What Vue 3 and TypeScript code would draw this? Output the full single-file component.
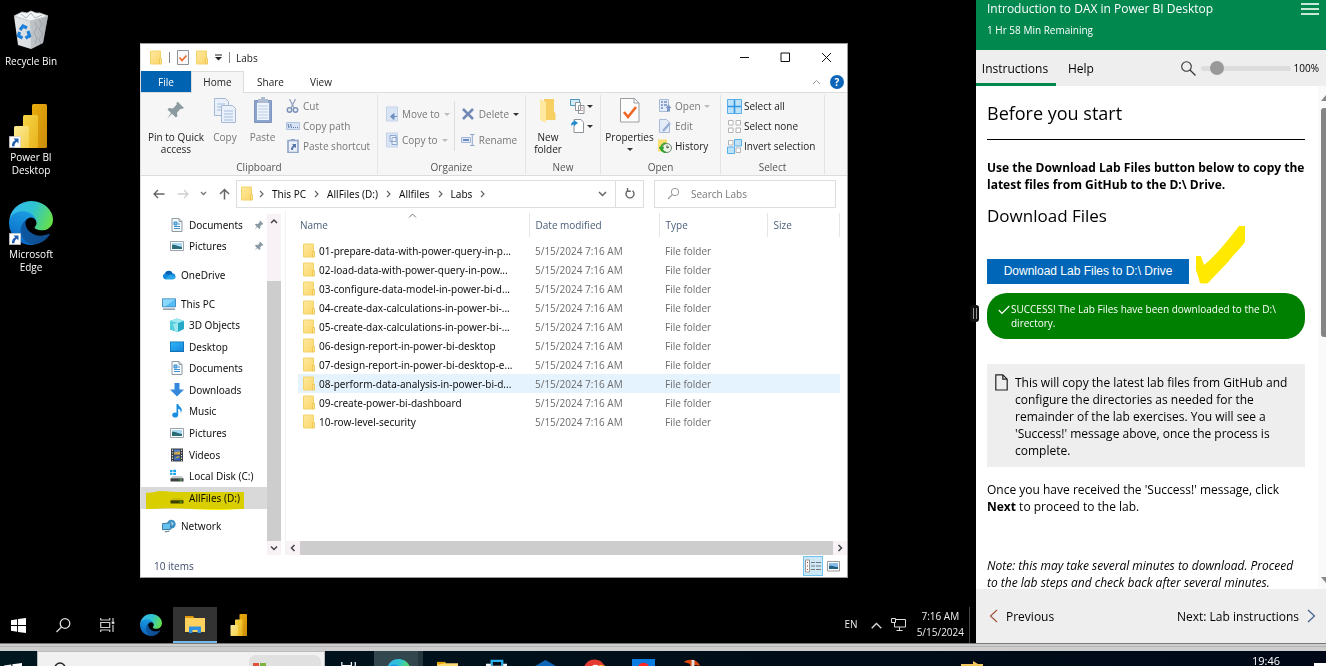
<script setup lang="ts">
import { ref } from 'vue'

interface NavItem {
  label: string
  icon: string
  level: number
  pinned?: boolean
  gap?: boolean
  active?: boolean
}

const navItems: NavItem[] = [
  { label: 'Documents', icon: 'doc', level: 1, pinned: true },
  { label: 'Pictures', icon: 'pic', level: 1, pinned: true },
  { label: 'OneDrive', icon: 'cloud', level: 0, gap: true },
  { label: 'This PC', icon: 'pc', level: 0, gap: true },
  { label: '3D Objects', icon: 'cube', level: 1 },
  { label: 'Desktop', icon: 'screen', level: 1 },
  { label: 'Documents', icon: 'doc', level: 1 },
  { label: 'Downloads', icon: 'down', level: 1 },
  { label: 'Music', icon: 'music', level: 1 },
  { label: 'Pictures', icon: 'pic', level: 1 },
  { label: 'Videos', icon: 'video', level: 1 },
  { label: 'Local Disk (C:)', icon: 'diskc', level: 1 },
  { label: 'AllFiles (D:)', icon: 'disk', level: 1, active: true },
  { label: 'Network', icon: 'network', level: 0, gap: true },
]

const files: string[] = [
  '01-prepare-data-with-power-query-in-p...',
  '02-load-data-with-power-query-in-pow...',
  '03-configure-data-model-in-power-bi-d...',
  '04-create-dax-calculations-in-power-bi-...',
  '05-create-dax-calculations-in-power-bi-...',
  '06-design-report-in-power-bi-desktop',
  '07-design-report-in-power-bi-desktop-e...',
  '08-perform-data-analysis-in-power-bi-d...',
  '09-create-power-bi-dashboard',
  '10-row-level-security',
]
const hovered = 7

const crumbs: string[] = ['This PC', 'AllFiles (D:)', 'Allfiles', 'Labs']
const hostApps: string[] = ['h-task', 'edge', 'h-folder', 'h-store', 'h-house', 'h-chrome', 'h-tile', 'h-red']
const zoom = ref(6)
const search = ref('')
</script>

<template>
  <div class="page">
    <svg class="defs" width="0" height="0" aria-hidden="true">
      <defs>
        <linearGradient id="gFold" x1="0" y1="0" x2="1" y2="1"><stop offset="0" stop-color="#ffe9a0" /><stop offset="1" stop-color="#fbd668" /></linearGradient>
        <linearGradient id="gE1" x1="0" y1="0" x2="1" y2="0"><stop offset="0" stop-color="#0c59a4" /><stop offset="1" stop-color="#114a8b" /></linearGradient>
        <linearGradient id="gE2" x1="0.6" y1="0" x2="0.3" y2="1"><stop offset="0" stop-color="#1b9de2" /><stop offset="0.5" stop-color="#1383d5" /><stop offset="1" stop-color="#0a5fbf" /></linearGradient>
        <linearGradient id="gE3" x1="0" y1="0.3" x2="1" y2="0.6"><stop offset="0" stop-color="#35b8f1" /><stop offset="0.5" stop-color="#2fc4cf" /><stop offset="1" stop-color="#66e04a" /></linearGradient>
        <linearGradient id="gB1" x1="0" y1="0" x2="1" y2="1"><stop offset="0" stop-color="#e9ac0b" /><stop offset="1" stop-color="#c98c0c" /></linearGradient>
        <linearGradient id="gB2" x1="0" y1="0" x2="1" y2="1"><stop offset="0" stop-color="#f7d548" /><stop offset="1" stop-color="#e8b21c" /></linearGradient>
        <linearGradient id="gB3" x1="0" y1="0" x2="1" y2="1"><stop offset="0" stop-color="#fcea9a" /><stop offset="1" stop-color="#f4cf44" /></linearGradient>
        <linearGradient id="gBin" x1="0" y1="0" x2="1" y2="0"><stop offset="0" stop-color="#e3e6e8" /><stop offset="0.6" stop-color="#d6dadd" /><stop offset="1" stop-color="#92989d" /></linearGradient>
        <linearGradient id="gScr" x1="0" y1="0" x2="1" y2="1"><stop offset="0" stop-color="#2fb4f7" /><stop offset="1" stop-color="#148ae0" /></linearGradient>
      </defs>
      <symbol id="folder" viewBox="0 0 12 15"><path d="M0.5 1h10v13h-10z" fill="url(#gFold)" stroke="#f3d36b" /><path d="M9.5 8.500h2v5.500h-2z" fill="#ffe591" stroke="#ecc14d" stroke-width=".8" /></symbol>
      <symbol id="edge" viewBox="0 0 256 256">
        <path fill="url(#gE1)" d="M231 190.500c-3.400 1.800-6.900 3.400-10.500 4.700a101 101 0 0 1-35.900 6.500c-47.300 0-88.500-32.600-88.500-74.300.1-11.400 6.400-21.900 16.400-27.300-42.800 1.800-53.800 46.400-53.800 72.500 0 73.900 68.100 81.400 82.800 81.400 7.900 0 19.800-2.300 27-4.600l1.300-.4a128.300 128.300 0 0 0 66.600-52.800c2-3.100-1.200-7.300-5.400-5.700z" />
        <path fill="url(#gE2)" d="M105.700 241.400a79.200 79.200 0 0 1-22.700-21.300A80.700 80.700 0 0 1 112.500 100c3.100-1.500 8.400-4.100 15.500-4a32.400 32.400 0 0 1 25.700 13 31.900 31.900 0 0 1 6.300 18.700c0-.2 24.500-79.600-80-79.600-43.900 0-80 41.600-80 78.200a130 130 0 0 0 12.100 56 128 128 0 0 0 156.400 67 75.500 75.500 0 0 1-62.800-7.900z" />
        <path fill="url(#gE3)" d="M152.300 148.900c-.8 1-3.300 2.500-3.300 5.700 0 2.600 1.700 5.100 4.700 7.200 14.400 10 41.500 8.700 41.600 8.700a59.600 59.600 0 0 0 30.300-8.300 61.400 61.400 0 0 0 30.400-52.900c.3-22.400-8-37.300-11.300-43.900C223.500 23.900 177.700 0 128 0A128 128 0 0 0 0 126.200C.5 89.700 36.800 60.200 80 60.200c3.500 0 23.500.3 42 10a72.600 72.600 0 0 1 30.900 29.300c6.100 10.600 7.200 24.100 7.200 29.500s-2.700 13.300-7.800 19.900z" />
      </symbol>
      <symbol id="powerbi" viewBox="0 0 34 44"><rect x="18" y="0" width="15" height="44" rx="1.500" fill="url(#gB1)" /><rect x="9" y="11" width="15" height="33" rx="1.500" fill="url(#gB2)" /><rect x="0" y="22" width="15" height="22" rx="1.500" fill="url(#gB3)" /></symbol>
      <symbol id="bin" viewBox="0 0 36 40">
        <path d="M1 6l16 4 18-4-5 27-12 6-13-4z" fill="url(#gBin)" /><path d="M17 10l18-4-5 27-12 6z" fill="#b3b8bc" opacity=".7" /><path d="M26 9l3 5-3 5 4 5-4 5 2 5M22 12l2 5-3 6 3 5-2 6" fill="none" stroke="#a0a5a9" stroke-width="1" />
        <path d="M1 6l8-4 5 1 4-2 5 2 4 0 8 3-18 5z" fill="#f3f5f6" stroke="#bfc4c7" stroke-width=".8" /><path d="M8 4l5 4 5-5 4 5 7-3" fill="none" stroke="#aeb3b7" stroke-width="1" />
        <g fill="none" stroke="#1c80d8" stroke-width="3.200"><path d="M7 20l3-4 4 2" /><path d="M15 21l1.500 5-4 2" /><path d="M9.500 28l-4-2 1-4" /></g>
      </symbol>
      <symbol id="shortcut" viewBox="0 0 12 12"><path fill="#fff" stroke="#bbb" stroke-width=".6" d="M.3.300h11.400v11.400H.3z" /><path d="M4.500 2.500h5v5L7.800 5.800C6 7 5.500 8.200 5.600 10.300H3C2.600 7.400 4 5.300 6.200 4.200z" fill="#235fb0" /></symbol>
      <symbol id="doc" viewBox="0 0 14 14"><path d="M2 .5h7l3 3v10H2z" fill="#f7f9fa" stroke="#8c9ba6" /><path d="M9 .5v3h3" fill="none" stroke="#8c9ba6" /><path d="M4 4h3v3H4zM4 8.500h6M4 10.500h6M8 6h2" stroke="#3b93cf" fill="#7cbce6" /></symbol>
      <symbol id="pic" viewBox="0 0 14 14"><path d="M.5 2.500h13v9H.5z" fill="#fff" stroke="#9aa5ad" /><path d="M2 4h10v6H2z" fill="#a8d8f2" /><path d="M2 6c3-1 6 2 10 2v2H2z" fill="#2a6b78" /></symbol>
      <symbol id="cloud" viewBox="0 0 15 14"><path d="M3.500 11.500a3.200 3.200 0 0 1-.3-6.200A4.500 4.500 0 0 1 11.300 5a3.300 3.300 0 0 1 .6 6.500z" fill="#1388dc" /><path d="M3.500 11.500L9 6.500l5.500 2.500a2.600 2.600 0 0 1-2.500 2.500z" fill="#28a8ea" /><path d="M3 5.500A4.500 4.500 0 0 1 11.300 5L7.500 7z" fill="#0863b5" /></symbol>
      <symbol id="pc" viewBox="0 0 15 14"><path d="M.5 1.500h14v8.500H.5z" fill="#52bdf6" stroke="#3b87b6" /><path d="M1 2h13L4 9.500H1z" fill="#8bd6fb" /><path d="M1 12.500h13" stroke="#8393a0" stroke-width="1.500" /></symbol>
      <symbol id="cube" viewBox="0 0 14 14"><path d="M0 3l7-2.500L14 3v8l-6 3-8-2.500z" fill="#24a9c9" /><path d="M0 3l8 2v9l-8-2.500z" fill="#54cfe0" /><path d="M0 3l7-2.500L14 3 8 5z" fill="#9eeaf0" /><path d="M3 6l5-1v9l-3-1z" fill="#c2f2f3" opacity=".7" /></symbol>
      <symbol id="screen" viewBox="0 0 14 14"><path d="M0 1.500h14v10.500H0z" fill="#1270b5" /><path d="M.8 2.300h12.400v8.500H.8z" fill="url(#gScr)" /></symbol>
      <symbol id="down" viewBox="0 0 14 14"><path d="M4.500 0h5v6.500H14L7 13.500 0 6.500h4.500z" fill="#3289dc" /></symbol>
      <symbol id="music" viewBox="0 0 14 14"><path d="M6.500 0h1.700c.3 2.300 4 3.300 3.500 6.800-.1 1-.6 1.800-1 2.200.4-2.600-1-4-2.500-4.300v6.300a3 2.500 0 1 1-1.700-2.200z" fill="#1a8ee0" /></symbol>
      <symbol id="video" viewBox="0 0 14 14"><path d="M1 .5h12v13H1z" fill="#35393d" /><path d="M4 1.500h6v5H4z" fill="#557fc4" /><path d="M4 7.500h6v5H4z" fill="#3566b5" /><path d="M4 4.500l6-1v3H4zM4 11l4-3 2 1z" fill="#d3a943" /><path d="M2.500 1.500v12M11.500 1.500v12" stroke="#d8d8d8" stroke-width="1.200" stroke-dasharray="1.400 1.300" /></symbol>
      <symbol id="disk" viewBox="0 0 14 14"><path d="M2.500 7h9L13.500 9.500H.5z" fill="#c9ccce" /><path d="M.5 9.300h13v3.200H.5z" fill="#3c4043" /><path d="M9.500 10.500h2.500v1H9.500z" fill="#58dc58" /></symbol>
      <symbol id="diskc" viewBox="0 0 14 14"><path d="M2.500 7h9L13.500 9.500H.5z" fill="#c9ccce" /><path d="M.5 9.300h13v3.200H.5z" fill="#3c4043" /><path d="M9.500 10.500h2.500v1H9.500z" fill="#58dc58" /><path d="M0 1h2.500v2H0zM3.200.8h2.800v2.200H3.200zM0 3.700h2.500v2H0zM3.200 3.700h2.800v2.300H3.200z" fill="#1ba5ee" /></symbol>
      <symbol id="network" viewBox="0 0 15 14"><circle cx="10" cy="5" r="4.600" fill="#3a8fc4" /><path d="M7 3.500c2-2 4-1 5 0s0 3-2 3z" fill="#9bd3ee" /><path d="M.5 4.500l9-1v7l-9 .5z" fill="#63c2f0" stroke="#356f98" /><path d="M3 13.300l5-.8" stroke="#7893a5" stroke-width="1.500" /></symbol>
      <symbol id="pin" viewBox="0 0 10 10"><path d="M6 .5L9.500 4l-1 .5-.6-.1L6.200 6.200l.1 2-1 .9-2-2L.5 9.500l2.200-3L.9 4.700l1-.9 2 .2L5.600 2.200 5.500 1.500z" fill="#8a9aa3" /></symbol>
      <symbol id="h-win" viewBox="0 0 16 16"><path d="M0 2.300l6.500-1v6.200H0zM7.500 1.100L16 0v7.500H7.500zM0 8.500h6.500v6.200L0 13.700zM7.500 8.500H16V16l-8.500-1.200z" fill="#fff" /></symbol>
      <symbol id="h-task" viewBox="0 0 24 24"><path d="M4 3v4h10V3" stroke="#fff" fill="none" stroke-width="1.300" /><path d="M18 3v9" stroke="#fff" stroke-width="1.300" /></symbol>
      <symbol id="h-folder" viewBox="0 0 24 24"><path d="M1 3h9v4H1z" fill="#e5a50a" /><path d="M1 6l9-1.500h13V20H1z" fill="#fdd978" /></symbol>
      <symbol id="h-store" viewBox="0 0 24 24"><path d="M7 7V2h11v5" fill="none" stroke="#28b3ef" stroke-width="2.400" /><path d="M1 5h5v2h13V5h4v16H1z" fill="#f4f8fb" /></symbol>
      <symbol id="h-house" viewBox="0 0 24 24"><path d="M0 8l12-7 12 7v16H0z" fill="#0f66b8" /></symbol>
      <symbol id="h-chrome" viewBox="0 0 24 24"><circle cx="12" cy="12" r="11.500" fill="#e33b30" /><circle cx="13" cy="12" r="6" fill="#fff" /><path d="M17 6l6 1v8h-4z" fill="#fbc934" /></symbol>
      <symbol id="h-tile" viewBox="0 0 24 24"><path d="M0 0h24v24H0z" fill="#087ce0" /><ellipse cx="12" cy="8" rx="5.500" ry="4" fill="#ff2525" /></symbol>
      <symbol id="h-red" viewBox="0 0 24 24"><path d="M3 3C8-1 17 0 20 7l-7-1v8L9 5z" fill="#df470c" /><path d="M11 1h3v14h-3z" fill="#dedede" /></symbol>
    </svg>

    <div class="main">
      <section class="desktop">
        <div class="shortcuts">
          <a class="dicon first" href="#bin"><svg class="d-bin"><use href="#bin" /></svg><span>Recycle Bin</span></a>
          <a class="dicon" href="#powerbi"><span class="art"><svg class="d-pbi"><use href="#powerbi" /></svg><svg class="arrow"><use href="#shortcut" /></svg></span><span>Power BI<br />Desktop</span></a>
          <a class="dicon" href="#edge"><span class="art"><svg class="d-edge"><use href="#edge" /></svg><svg class="arrow"><use href="#shortcut" /></svg></span><span>Microsoft<br />Edge</span></a>
        </div>

        <div class="window">
          <header class="titlebar">
            <svg class="fi"><use href="#folder" /></svg><i class="bar"></i>
            <svg width="12" height="15" viewBox="0 0 12 15"><path d="M.5.500h11v14H.5z" fill="#fafafa" stroke="#8e9499" /><path d="M2.500 7.500l2.500 3 4.500-5" fill="none" stroke="#f0662a" stroke-width="1.600" /></svg>
            <svg class="fi"><use href="#folder" /></svg>
            <svg width="7" height="7" viewBox="0 0 7 7"><path d="M0 1h7" stroke="#222" /><path d="M0 3h7L3.500 6.500z" fill="#222" /></svg>
            <i class="bar"></i><span class="wtitle">Labs</span>
            <div class="wctl">
              <button aria-label="Minimize"><svg width="11" height="11" viewBox="0 0 11 11"><path d="M1 5.500h9" stroke="#111" /></svg></button>
              <button aria-label="Maximize"><svg width="11" height="11" viewBox="0 0 11 11"><path d="M1 1h8.500v8.500H1z" stroke="#111" fill="none" /></svg></button>
              <button aria-label="Close"><svg width="11" height="11" viewBox="0 0 11 11"><path d="M1 1l9 9M10 1L1 10" stroke="#111" /></svg></button>
            </div>
          </header>
          <nav class="tabs">
            <button class="tab file">File</button><button class="tab home">Home</button><button class="tab">Share</button><button class="tab view">View</button>
            <div class="help">
              <svg width="9" height="6" viewBox="0 0 9 6"><path d="M1 5l3.500-3.500L8 5" stroke="#999" fill="none" /></svg>
              <button class="q" aria-label="Help">?</button>
            </div>
          </nav>

          <div class="ribbon">
            <div class="group g-clip">
              <div class="tools">
                <button class="big w-pin"><svg width="24" height="30" viewBox="0 0 24 30"><path d="M14 6l6 6-2 1-1.500-.3-3.500 4 .4 3.500-1.600 1.400-3.800-3.800L3 23l4-6L3.500 13.500 5 12l4 .4 3.700-4L12.500 6.500z" fill="#8b9a9f" /></svg><span>Pin to Quick<br />access</span></button>
                <button class="big dim w-copy"><svg width="24" height="30" viewBox="0 0 24 30"><g fill="#eaf1fa" stroke="#a5b8d4"><path d="M1.500 2.500h11l3 3v14h-14z" /><path d="M8.500 9.500h11l3 3v14h-14z" /></g><path d="M4 8h8M4 11h4M4 14h4M11 15h9M11 18h9M11 21h9M11 24h9" stroke="#a5bddf" /></svg><span>Copy</span></button>
                <button class="big dim w-paste"><svg width="20" height="30" viewBox="0 0 20 30"><path d="M1.500 4.500h17v22h-17z" fill="#8ca3cb" stroke="#7f95bd" /><path d="M4 7h12v17H4z" fill="#eef4fc" /><path d="M5 3h10v4H5zM8 1h4v3H8z" fill="#aebcd2" /><path d="M5 10h10M5 13h10M5 16h10M5 19h10M5 22h10" stroke="#b9cde9" /></svg><span>Paste</span></button>
                <div class="stack dim">
                  <button><svg width="14" height="14" viewBox="0 0 14 14"><path d="M3.500 0l4.500 9M9.500 0L5 9" stroke="#93a4bf" stroke-width="1.300" /><g fill="none" stroke="#7b92ba" stroke-width="1.500"><circle cx="3.500" cy="11" r="2.200" /><circle cx="9.500" cy="11" r="2.200" /></g></svg>Cut</button>
                  <button><svg width="14" height="14" viewBox="0 0 14 14"><path d="M.5 3.500h13v7H.5z" fill="#d7e3f5" stroke="#b3c4de" /><path d="M2 5l1 4M4.500 5l1 4M7 8.500h1M9 8.500h1M11 8.500h1" stroke="#5a77aa" /></svg>Copy path</button>
                  <button><svg width="14" height="14" viewBox="0 0 14 14"><path d="M2 1.500h10v12H2z" fill="#e9f0fa" stroke="#91a5c8" stroke-width="1.600" /><path d="M5 0h4v2H5z" fill="#91a5c8" /><path d="M6 5h4v4L8.500 8C7 9 7 10 7 11H5c0-2 .5-3.500 2.300-4.500z" fill="#5b78ab" /></svg>Paste shortcut</button>
                </div>
              </div>
              <div class="glabel">Clipboard</div>
            </div>
            <div class="group g-org">
              <div class="tools org">
                <div class="stack dim wide">
                  <button><svg width="12" height="16" viewBox="0 0 12 16"><path d="M.5 1h11v14H.5z" fill="#d9e4f4" stroke="#c4d2e8" /><path d="M11 10.500H6M8 7.500L4.500 10.500 8 13.500z" stroke="#6f8fc0" fill="#6f8fc0" /></svg>Move to<b class="caret lite"></b></button>
                  <button><svg width="12" height="16" viewBox="0 0 12 16"><path d="M.5 1h11v14H.5z" fill="#d9e4f4" stroke="#c4d2e8" /><path d="M4 3.500h6v6H4zM6 5.500h5v7H6z" fill="#eef3fa" stroke="#8ea7cf" /></svg>Copy to<b class="caret lite"></b></button>
                </div>
                <i class="vsep"></i>
                <div class="stack dim wide">
                  <button><svg width="14" height="14" viewBox="0 0 14 14"><path d="M2 2l10 10M12 2L2 12" stroke="#7088b5" stroke-width="2.500" /></svg>Delete<b class="caret"></b></button>
                  <button><svg width="14" height="14" viewBox="0 0 14 14"><path d="M.5 4.500h9v5h-9z" fill="#dfe9f7" stroke="#a3b6d6" /><path d="M2 7h6" stroke="#6e8cc0" stroke-width="2" /><path d="M9 1.500h4.500M9 12.500h4.500M11.300 1.500v11" stroke="#8fa5ca" /></svg>Rename</button>
                </div>
              </div>
              <div class="glabel">Organize</div>
            </div>
            <div class="group g-new">
              <div class="tools">
                <button class="big w-new"><svg width="18" height="30" viewBox="0 0 18 30"><path d="M5 3h10v13l1.500 1v7H5z" fill="#f8cf62" /><path d="M1 3l6 3v21l-6-3z" fill="#ffe8a1" /></svg><span>New<br />folder</span></button>
                <div class="stack icons">
                  <button aria-label="New item"><svg width="15" height="16" viewBox="0 0 15 16"><path d="M.5 1.500h9v6h-9z" fill="#d3ebf8" stroke="#4b94bd" /><path d="M5.500 4.500h5v8h-5zM8.500 7.500h5.500v8h-5.500z" fill="#fff" stroke="#8e9499" /><path d="M10 10h3M10 12.500h3" stroke="#c9a0a0" /></svg><b class="caret"></b></button>
                  <button aria-label="Easy access"><svg width="15" height="16" viewBox="0 0 15 16"><path d="M4 1.500h7l2.500 3v10H4z" fill="#fff" stroke="#8e9499" /><path d="M1 8c0-3 1-4 3-4.500V2l4 3-4 3V6.500C2.500 6.500 2 7 1 8z" fill="#238ad0" /></svg><b class="caret"></b></button>
                </div>
              </div>
              <div class="glabel">New</div>
            </div>
            <div class="group g-open">
              <div class="tools">
                <button class="big w-prop"><svg width="20" height="30" viewBox="0 0 20 30"><path d="M.5 2.500h14l4.500 4.500v19H.5z" fill="#fdfdfd" stroke="#9a9fa3" /><path d="M14 2.500V7h5" fill="none" stroke="#9a9fa3" /><path d="M4 16l4 5 8-10" fill="none" stroke="#f26522" stroke-width="2.600" /></svg><span>Properties</span><b class="caret"></b></button>
                <div class="stack">
                  <button class="dim"><svg width="14" height="14" viewBox="0 0 14 14"><path d="M1.500.500h9v12h-9z" fill="#e4ecf8" stroke="#a9bbd8" /><path d="M3 3h2M3 6h2M3 9h2M6 3h3M6 6h3" stroke="#6d8cbf" stroke-width="1.400" /><path d="M9 12.500V9H7.500L10.500 5.500 13.500 9H12v3.500z" fill="#7d98c6" /></svg>Open<b class="caret lite"></b></button>
                  <button class="dim"><svg width="14" height="14" viewBox="0 0 14 14"><path d="M1.500.500h7l3 3v10h-10z" fill="#e4ecf8" stroke="#a9bbd8" /><path d="M12 4l-7 8" stroke="#94abd2" stroke-width="2" /></svg>Edit</button>
                  <button><svg width="14" height="14" viewBox="0 0 14 14"><path d="M0 .5h9v12H0z" fill="#fbdf70" /><circle cx="9" cy="9" r="4.500" fill="#e9f3e6" stroke="#77857a" /><path d="M9 6.500V9l2-1" stroke="#444" fill="none" /><path d="M3 9a5 5 0 0 1 5-5M1.500 8l2 3 2-3M4 11a5 5 0 0 0 4 2.500" stroke="#2ea52e" stroke-width="1.600" fill="none" /></svg>History</button>
                </div>
              </div>
              <div class="glabel">Open</div>
            </div>
            <div class="group g-sel">
              <div class="tools">
                <div class="stack sel">
                  <button><svg width="15" height="15" viewBox="0 0 15 15"><path d="M.5.500h14v14H.5z" fill="#bfe2fb" stroke="#58aee8" /><path d="M7.500 1v13M1 7.500h13" stroke="#2f96e0" stroke-width="1.600" /></svg>Select all</button>
                  <button><svg width="15" height="15" viewBox="0 0 15 15"><path d="M1.500 1.500h4.500v4.500H1.500zM9 1.500h4.500v4.500H9zM1.500 9h4.500v4.500H1.500zM9 9h4.500v4.500H9z" fill="#fff" stroke="#b4b4b4" /></svg>Select none</button>
                  <button><svg width="15" height="15" viewBox="0 0 15 15"><path d="M1.500 1.500h4.500v4.500H1.500zM9 9h4.500v4.500H9z" fill="#fff" stroke="#b4b4b4" /><path d="M7.500.500h7v6.500h-7zM.5 8h7v6.500h-7z" fill="#bfe2fb" stroke="#58aee8" /></svg>Invert selection</button>
                </div>
              </div>
              <div class="glabel">Select</div>
            </div>
          </div>

          <div class="address">
            <div class="arrows">
              <svg width="12" height="10" viewBox="0 0 12 10"><path d="M11.500 5H1M5 1L1 5l4 4" fill="none" stroke="#666" stroke-width="1.300" /></svg>
              <svg width="12" height="10" viewBox="0 0 12 10"><path d="M.5 5H11M7 1l4 4-4 4" fill="none" stroke="#d0d0d0" stroke-width="1.300" /></svg>
              <svg width="7" height="5" viewBox="0 0 7 5"><path d="M1 1l2.500 2.500L6 1" fill="none" stroke="#777" stroke-width="1.300" /></svg>
              <svg width="11" height="12" viewBox="0 0 11 12"><path d="M5.500 11.500V1.500M1 6l4.500-4.500L10 6" fill="none" stroke="#666" stroke-width="1.500" /></svg>
            </div>
            <div class="path">
              <svg class="fi"><use href="#folder" /></svg>
              <svg width="5" height="8" viewBox="0 0 5 8"><path d="M1 1l3 3-3 3" fill="none" stroke="#666" stroke-width="1.200" /></svg>
              <template v-for="c in crumbs" :key="c"><a href="#path">{{ c }}</a><svg width="5" height="8" viewBox="0 0 5 8"><path d="M1 1l3 3-3 3" fill="none" stroke="#666" stroke-width="1.200" /></svg></template>
              <svg class="drop" width="9" height="6" viewBox="0 0 9 6"><path d="M1 1l3.500 3.500L8 1" fill="none" stroke="#666" stroke-width="1.500" /></svg>
            </div>
            <button class="refresh" aria-label="Refresh"><svg width="12" height="12" viewBox="0 0 12 12"><path d="M8.500 2.800a4 4 0 1 1-5 0M3.500 0v3.300h3.300" fill="none" stroke="#666" stroke-width="1.400" /></svg></button>
            <label class="search"><svg width="13" height="13" viewBox="0 0 13 13"><circle cx="8" cy="5" r="3.700" fill="none" stroke="#999" /><path d="M5.300 7.700L1 12" stroke="#999" stroke-width="1.200" /></svg><input v-model="search" type="text" placeholder="Search Labs" aria-label="Search Labs" /></label>
          </div>

          <div class="body">
            <div class="tree">
              <a v-for="(n, i) in navItems" :key="i" href="#nav" class="node" :class="{ sub: n.level, gap: n.gap, active: n.active }">
                <svg class="nicon"><use :href="'#' + n.icon" /></svg><span>{{ n.label }}</span>
                <svg v-if="n.pinned" class="npin"><use href="#pin" /></svg>
                <svg v-if="n.active" class="marker" viewBox="0 0 100 22" preserveAspectRatio="none"><path d="M0 3C5 3 10 2 13 1c8 0 12 1 18 1h67v18c-10 0-12 1-24 1-20 0-30-2-52-2-6 0-16 1-22 1z" fill="#fff200" /></svg>
              </a>
            </div>
            <div class="vbar">
              <svg width="14" height="14" viewBox="0 0 14 14"><path d="M4 9l3-3 3 3" fill="none" stroke="#444" stroke-width="1.500" /></svg>
              <i></i>
              <svg width="14" height="14" viewBox="0 0 14 14"><path d="M4 5.500l3 3 3-3" fill="none" stroke="#444" stroke-width="1.500" /></svg>
            </div>
            <div class="list">
              <table>
                <colgroup><col class="c0" /><col class="c1" /><col class="c2" /><col class="c3" /></colgroup>
                <thead><tr><th>Name<svg class="sort" width="9" height="5" viewBox="0 0 9 5"><path d="M1 4.500L4.500 1 8 4.500" fill="none" stroke="#777" /></svg></th><th>Date modified</th><th>Type</th><th>Size</th></tr></thead>
                <tbody>
                  <tr v-for="(f, i) in files" :key="f" :class="{ hover: i === hovered }">
                    <td><svg class="fi"><use href="#folder" /></svg>{{ f }}</td><td>5/15/2024 7:16 AM</td><td>File folder</td><td></td>
                  </tr>
                </tbody>
              </table>
              <div class="hbar">
                <svg width="14" height="14" viewBox="0 0 14 14"><path d="M8.500 4l-3 3 3 3" fill="none" stroke="#444" stroke-width="1.500" /></svg>
                <i></i>
                <svg width="14" height="14" viewBox="0 0 14 14"><path d="M5.500 4l3 3-3 3" fill="none" stroke="#444" stroke-width="1.500" /></svg>
              </div>
            </div>
          </div>
          <footer class="status"><span>10 items</span>
            <div class="modes">
              <button class="on" aria-label="Details"><svg width="16" height="14" viewBox="0 0 16 14"><path d="M.5 1h4v12h-4z" fill="#fff" stroke="#999" /><path d="M2 3.500h1M2 7h1M2 10.500h1" stroke="#b33" /><path d="M6 3.500h4M11 3.500h5M6 7h4M11 7h5M6 10.500h4M11 10.500h5" stroke="#777" /></svg></button>
              <button aria-label="Large icons"><svg width="13" height="11" viewBox="0 0 13 11"><path d="M.5.500h12v9.500H.5z" fill="#fff" stroke="#999" /><path d="M2 2h9v6H2z" fill="#87bfea" /><path d="M2 5c4-1 5 1 9 1v2H2z" fill="#245f88" /></svg></button>
            </div>
          </footer>
        </div>

        <div class="taskbar">
          <button class="start" aria-label="Start"><svg width="15" height="15"><use href="#h-win" /></svg></button>
          <button aria-label="Search"><svg width="15" height="15" viewBox="0 0 15 15"><circle cx="9" cy="5.500" r="4.800" fill="none" stroke="#ddd" stroke-width="1.300" /><path d="M5.500 9L.5 14" stroke="#ddd" stroke-width="1.300" /></svg></button>
          <button aria-label="Task view"><svg width="15" height="14" viewBox="0 0 15 14"><path d="M.7 0v2h9V0M.7 4.500h9v5h-9zM.7 14v-2h9v2M13 0v3M13 7v7" fill="none" stroke="#ccc" stroke-width="1.200" /><path d="M11.700 3.500h2.600v2.300h-2.600z" fill="#eee" /></svg></button>
          <button aria-label="Microsoft Edge"><svg width="22" height="22"><use href="#edge" /></svg></button>
          <button class="active" aria-label="File Explorer"><svg width="20" height="17" viewBox="0 0 20 17"><path d="M0 0h8l1.500 2H0z" fill="#e0960a" /><path d="M0 2h20v14H0z" fill="#fcd15e" /><path d="M4 17v-6.500h12V17h-3.500v-3h-5v3z" fill="#2f8fe0" /></svg></button>
          <button aria-label="Power BI"><svg width="18" height="22"><use href="#powerbi" /></svg></button>
          <div class="tray">
            <span class="lang">EN</span>
            <svg width="11" height="7" viewBox="0 0 11 7"><path d="M.7 6.300L5.500 1.500l4.800 4.800" fill="none" stroke="#ddd" stroke-width="1.300" /></svg>
            <svg width="15" height="14" viewBox="0 0 15 14"><path d="M5 1.500h9.500v7.500H3.500V5M8.500 9v3M5.500 12.500h6" fill="none" stroke="#ddd" /><path d="M.5.500h4v4h-4z" fill="none" stroke="#ddd" /></svg>
            <span class="clock">7:16 AM<br />5/15/2024</span><i class="peek"></i>
          </div>
        </div>
        <div class="splitter"><i></i><i></i></div>
      </section>

      <aside class="panel">
        <header class="phead">
          <div><div class="ptitle">Introduction to DAX in Power BI Desktop</div><div class="ptime">1 Hr 58 Min Remaining</div></div>
          <button class="burger" aria-label="Menu"><i></i><i></i><i></i></button>
        </header>
        <nav class="ptabs">
          <button class="on">Instructions</button><button class="helpb">Help</button>
          <label class="zoom"><svg width="15" height="15" viewBox="0 0 15 15"><circle cx="5.500" cy="5.500" r="4.800" fill="none" stroke="#333" stroke-width="1.100" /><path d="M9 9l5.500 5.500" stroke="#333" stroke-width="1.300" /></svg><input v-model="zoom" type="range" min="0" max="50" aria-label="Zoom" /><span>100%</span></label>
        </nav>
        <div class="pscroll">
          <div class="pcontent">
            <h1>Before you start</h1>
            <p class="strong">Use the Download Lab Files button below to copy the<br />latest files from GitHub to the D:\ Drive.</p>
            <h2>Download Files</h2>
            <div class="dl"><button>Download Lab Files to D:\ Drive</button>
              <svg class="tick" width="50" height="58" viewBox="0 0 50 58"><path d="M43 0h6v16C44 23 38 28 32 36L12 57Q10 58 4 57Q2 50 0 44V30h5l3 9C20 29 29 18 43 0z" fill="#ffe900" /></svg>
            </div>
            <div class="success"><svg width="12" height="12" viewBox="0 0 12 12"><path d="M.8 6l3.200 3.500L11.300 2" fill="none" stroke="#fff" stroke-width="1.200" /></svg><span>SUCCESS! The Lab Files have been downloaded to the D:\<br />directory.</span></div>
            <div class="note"><svg width="13" height="17" viewBox="0 0 13 17"><path d="M.8.800h7l4.400 4.400v10.800H.8zM7.800.800v4.400h4.400" fill="none" stroke="#222" stroke-width="1.200" /></svg><span>This will copy the latest lab files from GitHub and<br />configure the directories as needed for the<br />remainder of the lab exercises. You will see a<br />'Success!' message above, once the process is<br />complete.</span></div>
            <p class="once">Once you have received the 'Success!' message, click<br /><b>Next</b> to proceed to the lab.</p>
            <p class="ital">Note: this may take several minutes to download. Proceed<br />to the lab steps and check back after several minutes.</p>
          </div>
          <div class="pbar"><svg width="10" height="6" viewBox="0 0 10 6"><path d="M0 6l5-6 5 6z" fill="#888" /></svg><i></i><svg width="10" height="6" viewBox="0 0 10 6"><path d="M0 0l5 6 5-6z" fill="#888" /></svg></div>
        </div>
        <footer class="pfoot">
          <button><svg width="9" height="14" viewBox="0 0 9 14"><path d="M8 1L1.500 7 8 13" fill="none" stroke="#a1543c" stroke-width="1.200" /></svg>Previous</button>
          <button>Next: Lab instructions<svg width="9" height="14" viewBox="0 0 9 14"><path d="M1 1l6.500 6L1 13" fill="none" stroke="#3e5e93" stroke-width="1.200" /></svg></button>
        </footer>
      </aside>
    </div>

    <div class="strip"><i></i></div>
    <div class="host">
      <div class="hstart"><svg width="18" height="18"><use href="#h-win" /></svg></div>
      <div class="hsearch"><svg width="12" height="12" viewBox="0 0 12 12"><circle cx="6" cy="6" r="5" fill="none" stroke="#222" stroke-width="1.500" /></svg><div class="hpill"><i></i><i></i></div></div>
      <div v-for="a in hostApps" :key="a" class="happ" :class="{ on: a === 'edge' }"><svg><use :href="'#' + a" /></svg></div>
      <div class="hright"><svg width="22" height="12" viewBox="0 0 22 12"><path d="M0 3h12V0l5 3h5v9H0z" fill="#f2c65a" /></svg><span>19:46</span><i></i></div>
    </div>
  </div>
</template>

<style>
html, body { margin: 0; background: #000; overflow: hidden; }
</style>

<style scoped>
* { box-sizing: border-box; }
.page { height: 100vh; display: flex; flex-direction: column; font-family: "Open Sans", "Noto Sans", sans-serif; font-size: 10px; color: #222; overflow: hidden; }
.defs { position: absolute; }
button, input { font: inherit; color: inherit; background: none; border: 0; padding: 0; margin: 0; }
a { color: inherit; text-decoration: none; }
svg { display: block; flex: none; }
.main { flex: 1; min-height: 0; display: flex; }
.desktop { flex: 1; min-width: 0; position: relative; background: #000; display: flex; flex-direction: column; justify-content: space-between; }
.shortcuts { width: 62px; padding-top: 10px; display: flex; flex-direction: column; gap: 24px; }
.dicon { display: flex; flex-direction: column; align-items: center; color: #fff; line-height: 13px; text-align: center; gap: 3px; white-space: nowrap; }
.dicon.first { margin-bottom: 12px; gap: 5px; }
.d-bin { width: 36px; height: 40px; }
.art { position: relative; width: 44px; height: 44px; display: flex; justify-content: center; }
.d-pbi { width: 34px; height: 44px; }
.d-edge { width: 44px; height: 44px; }
.arrow { position: absolute; left: 0; bottom: 0; width: 12px; height: 12px; }
.window { position: absolute; left: 140px; top: 43px; width: 708px; height: 535px; background: #fff; border: 1px solid #9a9a9a; border-left-color: #ddd; display: flex; flex-direction: column; }
.fi { width: 12px; height: 15px; }
.titlebar { height: 27px; display: flex; align-items: center; padding-left: 9px; gap: 7px; flex: none; }
.bar { width: 1px; height: 11px; background: #888; }
.wtitle { margin-left: -1px; }
.wctl { margin-left: auto; display: flex; }
.wctl button { width: 41px; height: 27px; display: grid; place-items: center; }
.tabs { height: 22px; flex: none; display: flex; border-bottom: 1px solid #dcdcdc; }
.tab { width: 53px; height: 21px; font-size: 10px; }
.tab.file { width: 50px; background: #0063b1; color: #fff; }
.tab.home { width: 53px; height: 22px; background: #f6f6f6; border: 1px solid #dcdcdc; border-bottom: 0; padding-bottom: 1px; }
.tab.view { width: 48px; }
.help { margin-left: auto; display: flex; align-items: center; gap: 9px; padding-right: 3px; }
.q { width: 14px; height: 14px; border-radius: 7px; background: #0b66b9; color: #fff; font-weight: 700; line-height: 14px; }
.ribbon { height: 83px; flex: none; display: flex; background: #f6f6f6; border-bottom: 1px solid #dcdcdc; }
.group { display: flex; flex-direction: column; justify-content: space-between; margin: 2px 0 1px; border-right: 1px solid #e4e4e4; flex: none; }
.g-clip { width: 237px; }
.g-org { width: 148px; }
.g-new { width: 75px; }
.g-open { width: 120px; }
.g-sel { width: 104px; }
.tools { display: flex; padding-top: 1px; }
.glabel { text-align: center; line-height: 14px; color: #555; }
.big { display: flex; flex-direction: column; align-items: center; line-height: 12px; gap: 5px; white-space: nowrap; height: 62px; }
.w-pin { width: 70px; }
.w-copy { width: 28px; }
.w-paste { width: 47px; }
.w-new { width: 44px; }
.w-prop { width: 57px; }
.dim { color: #777; }
.stack { display: flex; flex-direction: column; }
.stack button { height: 20px; display: flex; align-items: center; gap: 3px; white-space: nowrap; }
.stack.wide button { height: 26px; gap: 4px; }
.org { padding: 6px 0 0 8px; gap: 6px; }
.org .stack + .vsep { margin-left: -2px; }
.stack.icons button { gap: 2px; }
.sel { padding-left: 6px; }
.sel button { gap: 2px; }
.vsep { width: 1px; height: 50px; background: #dedede; }
.caret { border: 3px solid transparent; border-top-color: #333; border-bottom: 0; }
.caret.lite { border-top-color: #bbb; }
.address { height: 35px; flex: none; display: flex; align-items: center; padding-right: 11px; }
.arrows { width: 95px; display: flex; align-items: center; justify-content: space-between; padding: 0 6px 0 12px; }
.path { flex: 1; height: 28px; border: 1px solid #dedede; display: flex; align-items: center; gap: 8px; padding: 0 8px 0 4px; color: #111; font-family: "Noto Sans", sans-serif; }
.path .fi { margin-right: -2px; }
.drop { margin-left: auto; }
.refresh { width: 28px; height: 28px; border: 1px solid #dedede; border-left: 0; display: grid; place-items: center; }
.search { width: 182px; height: 28px; margin-left: 10px; border: 1px solid #dedede; display: flex; align-items: center; gap: 11px; padding-left: 12px; color: #777; }
.search input { width: 120px; outline: 0; }
.search input::placeholder { color: #777; opacity: 1; }
.body { flex: 1; min-height: 0; display: flex; }
.tree { width: 126px; display: flex; flex-direction: column; padding: 3px 0 18px; color: #111; font-family: "Noto Sans", sans-serif; }
.node { flex: 1; display: flex; align-items: center; gap: 5px; padding-left: 21px; position: relative; white-space: nowrap; }
.node.sub { padding-left: 29px; }
.node.gap { margin-top: 7px; }
.node.active { background: #d9d9d9; }
.nicon { width: 14px; height: 14px; }
.npin { width: 10px; height: 10px; margin-left: auto; margin-right: 3px; }
.marker { position: absolute; left: 5px; top: 3px; width: 100px; height: 21px; mix-blend-mode: multiply; }
.vbar { width: 14px; margin-top: 3px; background: #f8f2f7; display: flex; flex-direction: column; }
.vbar i { flex: 1; margin-top: 53px; background: #cdcdcd; }
.list { flex: 1; margin-left: 4px; min-width: 0; border-left: 1px solid #f2f2f2; display: flex; flex-direction: column; justify-content: space-between; }
table { border-collapse: collapse; table-layout: fixed; width: 542px; margin: 2px 0 0 12px; }
.c0 { width: 231px; }
.c1 { width: 130px; }
.c2 { width: 108px; }
th { height: 24px; font-weight: 400; text-align: left; color: #4c607a; padding: 0 0 0 6px; border-right: 1px solid #e5e5e5; position: relative; }
th:first-child { padding-left: 2px; }
.sort { position: absolute; left: 110px; top: 0; }
thead::after { content: ""; display: block; height: 4px; }
td { height: 19px; padding: 0 0 0 6px; color: #6d6d6d; white-space: nowrap; overflow: hidden; }
td:first-child { padding-left: 5px; color: #111; display: flex; align-items: center; gap: 4px; font-family: "Noto Sans", sans-serif; }
.hover { background: #e5f3ff; }
.hbar { height: 14px; display: flex; background: #f8f2f7; }
.hbar i { flex: 1; background: #cdcdcd; }
.status { height: 22px; flex: none; display: flex; align-items: center; justify-content: space-between; padding: 0 6px 0 13px; color: #3c4a6a; }
.modes { display: flex; align-items: center; gap: 3px; }
.modes button { height: 20px; display: grid; place-items: center; padding: 0 1px; }
.modes .on { background: #cce8f6; border: 1px solid #6fc3ec; }
.taskbar { height: 36px; display: flex; color: #eee; }
.taskbar button { width: 44px; height: 36px; display: grid; place-items: center; flex: none; }
.taskbar .start { width: 41px; padding-right: 4px; }
.taskbar .active { background: #333; border-bottom: 2px solid #76b9ed; }
.tray { margin-left: auto; display: flex; align-items: center; gap: 9px; }
.lang { margin-right: 4px; padding-bottom: 3px; }
.clock { text-align: center; line-height: 16px; padding-bottom: 2px; margin-left: 2px; }
.peek { width: 1px; height: 36px; background: #444; margin: 0 6px 0 -4px; }
.splitter { position: absolute; right: -3px; top: 305px; width: 9px; height: 17px; border-radius: 3px; background: #111; display: flex; gap: 2px; align-items: center; justify-content: center; z-index: 2; }
.splitter i { width: 1px; height: 11px; background: #999; }
.panel { width: 350px; flex: none; background: #fff; display: flex; flex-direction: column; font-size: 12px; color: #000; }
.phead { height: 50px; flex: none; background: #00884f; color: #fff; display: flex; justify-content: space-between; padding: 0 7px 0 11px; white-space: nowrap; }
.ptitle { line-height: 18px; font-size: 12px; }
.ptime { margin-top: 4px; line-height: 16px; font-size: 10px; }
.burger { width: 18px; height: 19px; display: flex; flex-direction: column; justify-content: flex-end; gap: 3px; padding-bottom: 4px; }
.burger i { height: 2px; background: #c8e8d8; width: 18px; }
.ptabs { height: 36px; flex: none; background: #eee; display: flex; }
.ptabs button { height: 36px; }
.ptabs .on { width: 80px; border-bottom: 3px solid #00884f; padding-right: 2px; padding-top: 3px; }
.ptabs .helpb { padding-left: 12px; }
.zoom { margin-left: auto; display: flex; align-items: center; padding-right: 7px; gap: 3px; font-size: 10px; }
.zoom input { appearance: none; width: 90px; height: 5px; background: #ddd; border-radius: 3px; margin-left: 2px; }
.zoom input::-webkit-slider-thumb { appearance: none; width: 14px; height: 14px; border-radius: 7px; background: #999; }
.pscroll { flex: 1; min-height: 0; display: flex; overflow: hidden; }
.pcontent { flex: 1; padding: 14px 13px 0 11px; line-height: 17px; white-space: nowrap; }
h1 { font-size: 18px; font-weight: 400; line-height: 26px; margin: 0; padding-bottom: 13px; border-bottom: 1px solid #000; }
p { margin: 0; }
.strong { font-weight: 700; margin-top: 19px; }
h2 { font-size: 17px; font-weight: 400; line-height: 24px; margin: 11px 0 31px; }
.dl { position: relative; height: 25px; }
.dl button { height: 25px; width: 202px; background: #0067b8; color: #fff; font-family: "Liberation Sans", Arial, sans-serif; font-size: 12px; }
.tick { position: absolute; left: 209px; top: -33px; }
.success { margin-top: 9px; background: #008000; color: #fff; border-radius: 20px; display: flex; font-size: 10px; line-height: 14px; padding: 9px 0 9px 11px; height: 46px; gap: 1px; }
.success svg { margin-top: 2px; }
.note { margin-top: 25px; background: #eee; display: flex; gap: 7px; padding: 10px 0 8px 8px; }
.once { margin-top: 14px; }
.ital { margin-top: 42px; font-style: italic; }
.pbar { width: 8px; background: #fafafa; display: flex; flex-direction: column; padding: 9px 0 6px 3px; overflow: hidden; }
.pbar i { margin-top: 7px; margin-bottom: auto; height: 229px; background: #858585; border-radius: 3px 0 0 3px; }
.pfoot { height: 54px; flex: none; background: #eee; display: flex; justify-content: space-between; padding: 0 10px 0 13px; }
.pfoot button { display: flex; align-items: center; gap: 8px; }
.strip { height: 8px; flex: none; background: #cdcdcd; border-top: 1px solid #777; padding-top: 2px; }
.strip i { display: block; height: 1px; background: #b4b4b4; }
.host { height: 15px; flex: none; display: flex; overflow: hidden; background: linear-gradient(90deg, #001720, #000d18 60%, #000818); }
.hstart { width: 37px; padding: 12px 0 0 4px; }
.hsearch { width: 288px; border: 1px solid #bbb; border-bottom: 0; background: #f1f1f1; display: flex; justify-content: space-between; padding: 0 3px 0 16px; }
.hsearch svg { margin-top: 10px; }
.hpill { width: 72px; height: 30px; margin-top: 3px; border-radius: 7px; background: #e0e0e0; padding: 8px 4px; display: flex; gap: 1px; }
.hpill i { width: 6px; height: 6px; background: #e3513a; }
.hpill i + i { background: #7db33a; }
.happ { width: 49px; height: 40px; flex: none; display: flex; justify-content: center; padding-top: 8px; }
.happ.on { background: linear-gradient(90deg, #33474f 44px, #26363d 44px); }
.happ svg { width: 23px; height: 23px; }
.hright { flex: 1; display: flex; color: #fff; line-height: 20px; padding-left: 244px; font-size: 11px; }
.hright svg { margin-top: 10px; }
.hright span { margin-left: auto; }
.hright i { width: 12px; margin: 12px 0 0 34px; background: #fff; }
</style>
